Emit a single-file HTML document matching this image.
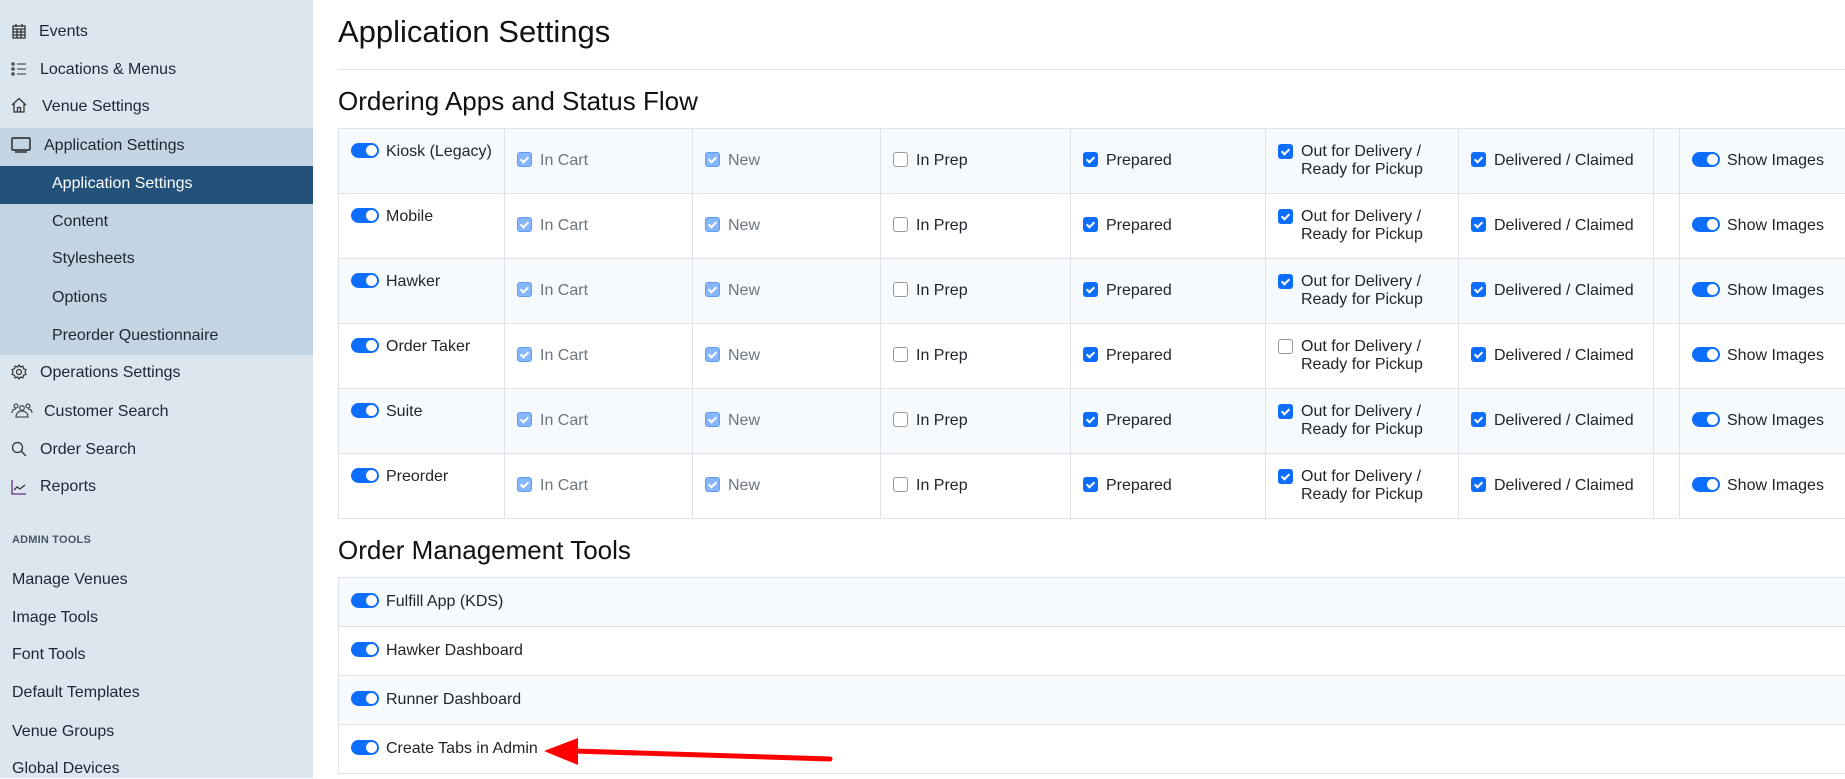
<!DOCTYPE html>
<html><head><meta charset="utf-8"><style>
*{box-sizing:border-box;margin:0;padding:0}
body{width:1845px;height:778px;overflow:hidden;background:#fff;font-family:"Liberation Sans",sans-serif;color:#212529;position:relative}
#sb{position:absolute;left:0;top:0;width:313px;height:778px;background:#dce6ef}
#sub{position:absolute;left:0;top:128px;width:313px;height:227px;background:#c3d4e3}
#act{position:absolute;left:0;top:166px;width:313px;height:38px;background:#22527a}
.si{position:absolute;font-size:16px;line-height:20px;color:#1d2733;white-space:nowrap}
.ic{position:absolute;left:11px;width:16px;height:16px}
.hd{position:absolute;left:12px;top:534px;font-size:11px;font-weight:bold;color:#4a5562;letter-spacing:.2px}
h1{position:absolute;left:338px;top:14px;font-size:31px;font-weight:normal;color:#111}
.hr{position:absolute;left:338px;top:69px;width:1507px;height:1px;background:#dee2e6}
h2{position:absolute;font-size:26px;font-weight:normal;color:#111;left:338px}
table{position:absolute;left:338px;border-collapse:collapse;font-size:16px;table-layout:fixed}
td{border:1px solid #dee2e6;padding:0 12px;vertical-align:middle;line-height:18px}
tr.o td{background:#f7fafd}
.t{display:inline-block;width:28px;height:15px;border-radius:8px;background:#0d6efd;position:relative;vertical-align:-2px;margin-right:7px}
.t:after{content:"";position:absolute;right:2px;top:2px;width:11px;height:11px;border-radius:50%;background:#fff}
.c{display:inline-block;width:15px;height:15px;border-radius:3px;background:#0d6efd;vertical-align:-2px;margin-right:8px;position:relative}
.c:after{content:"";position:absolute;left:5px;top:2.5px;width:3px;height:6px;border:solid #fff;border-width:0 2px 2px 0;transform:rotate(45deg)}
.c.l{background:#86b7fe;border:1px solid #5e9cf5}
.c.l:after{left:4px;top:1.5px}
.c.u{background:#fff;border:1px solid #999}
.c.u:after{display:none}
.g{color:#6c757d}
.f{vertical-align:top;padding-top:14px}
.od{display:flex}
.od .c{flex:none;margin-top:1px}
</style></head><body>
<div id="sb"></div><div id="sub"></div><div id="act"></div>
<svg class="ic" style="top:23px" viewBox="0 0 16 16" fill="none" stroke="#333" stroke-width="1.3"><rect x="2" y="3" width="12" height="12"/><path d="M2 6h12M2 9h12M2 12h12M6 6v9M10 6v9M5 1v3M11 1v3"/></svg>
<div class="si" style="left:39px;top:22px">Events</div>
<svg class="ic" style="top:61px" viewBox="0 0 16 16" stroke="#555" stroke-width="1.3"><path d="M6 3h9M6 8h9M6 13h9"/><circle cx="2" cy="3" r="1.2" fill="#555"/><circle cx="2" cy="8" r="1.2" fill="#555"/><circle cx="2" cy="13" r="1.2" fill="#555"/></svg>
<div class="si" style="left:40px;top:60px">Locations &amp; Menus</div>
<svg class="ic" style="top:97px" viewBox="0 0 16 16" fill="none" stroke="#333" stroke-width="1.3"><path d="M1 8L8 1.5 15 8M3 6.5V15h10V6.5M6.5 15v-4.5h3V15"/></svg>
<div class="si" style="left:42px;top:97px">Venue Settings</div>
<svg style="position:absolute;left:11px;top:137px;width:20px;height:16px" viewBox="0 0 20 16" fill="none" stroke="#222" stroke-width="1.4"><rect x="1" y="1" width="18" height="12" rx="1"/><path d="M4 15h12"/></svg>
<div class="si" style="left:44px;top:136px">Application Settings</div>
<div class="si" style="left:52px;top:174px;color:#fff">Application Settings</div>
<div class="si" style="left:52px;top:212px">Content</div>
<div class="si" style="left:52px;top:249px">Stylesheets</div>
<div class="si" style="left:52px;top:288px">Options</div>
<div class="si" style="left:52px;top:326px">Preorder Questionnaire</div>
<svg class="ic" style="top:364px" viewBox="0 0 16 16" fill="none" stroke="#333" stroke-width="1.2"><circle cx="8" cy="8" r="2.5"/><path d="M8 1l1.5 2 2.5-.8.5 2.5 2.5 1-1 2.3 1 2.3-2.5 1-.5 2.5-2.5-.8L8 15l-1.5-2-2.5.8-.5-2.5-2.5-1 1-2.3-1-2.3 2.5-1 .5-2.5 2.5.8z"/></svg>
<div class="si" style="left:40px;top:363px">Operations Settings</div>
<svg style="position:absolute;left:11px;top:402px;width:22px;height:16px" viewBox="0 0 22 16" fill="none" stroke="#333" stroke-width="1.1"><circle cx="5" cy="4" r="2"/><circle cx="11" cy="6" r="2.3"/><circle cx="17" cy="4" r="2"/><path d="M1 11c0-3 2-4 4-4M21 11c0-3-2-4-4-4M5 15c0-4 3-6 6-6s6 2 6 6z"/></svg>
<div class="si" style="left:44px;top:402px">Customer Search</div>
<svg class="ic" style="top:441px" viewBox="0 0 16 16" fill="none" stroke="#333" stroke-width="1.3"><circle cx="6.5" cy="6.5" r="5"/><path d="M10 10l5 5"/></svg>
<div class="si" style="left:40px;top:440px">Order Search</div>
<svg class="ic" style="top:479px" viewBox="0 0 16 16" fill="none" stroke-width="1.3"><path d="M1 1v14h14" stroke="#6a2a8a"/><path d="M3 11l3-3 3 2 5-4" stroke="#333"/></svg>
<div class="si" style="left:40px;top:477px">Reports</div>
<div class="hd">ADMIN TOOLS</div>
<div class="si" style="left:12px;top:570px">Manage Venues</div>
<div class="si" style="left:12px;top:608px">Image Tools</div>
<div class="si" style="left:12px;top:645px">Font Tools</div>
<div class="si" style="left:12px;top:683px">Default Templates</div>
<div class="si" style="left:12px;top:722px">Venue Groups</div>
<div class="si" style="left:12px;top:759px">Global Devices</div>

<h1>Application Settings</h1>
<div class="hr"></div>
<h2 style="top:86px">Ordering Apps and Status Flow</h2>
<table style="top:128px;width:1600px">
<colgroup><col style="width:166px"><col style="width:188px"><col style="width:188px"><col style="width:190px"><col style="width:195px"><col style="width:193px"><col style="width:195px"><col style="width:26px"><col></colgroup>
<tr class="o" style="height:65px"><td class="f"><span class="t"></span>Kiosk (Legacy)</td><td class="g"><span class="c l"></span>In Cart</td><td class="g"><span class="c l"></span>New</td><td><span class="c u"></span>In Prep</td><td><span class="c"></span>Prepared</td><td><div class="od"><span class="c"></span><span>Out for Delivery /<br>Ready for Pickup</span></div></td><td><span class="c"></span>Delivered / Claimed</td><td></td><td><span class="t"></span>Show Images</td></tr>
<tr style="height:65px"><td class="f"><span class="t"></span>Mobile</td><td class="g"><span class="c l"></span>In Cart</td><td class="g"><span class="c l"></span>New</td><td><span class="c u"></span>In Prep</td><td><span class="c"></span>Prepared</td><td><div class="od"><span class="c"></span><span>Out for Delivery /<br>Ready for Pickup</span></div></td><td><span class="c"></span>Delivered / Claimed</td><td></td><td><span class="t"></span>Show Images</td></tr>
<tr class="o" style="height:65px"><td class="f"><span class="t"></span>Hawker</td><td class="g"><span class="c l"></span>In Cart</td><td class="g"><span class="c l"></span>New</td><td><span class="c u"></span>In Prep</td><td><span class="c"></span>Prepared</td><td><div class="od"><span class="c"></span><span>Out for Delivery /<br>Ready for Pickup</span></div></td><td><span class="c"></span>Delivered / Claimed</td><td></td><td><span class="t"></span>Show Images</td></tr>
<tr style="height:65px"><td class="f"><span class="t"></span>Order Taker</td><td class="g"><span class="c l"></span>In Cart</td><td class="g"><span class="c l"></span>New</td><td><span class="c u"></span>In Prep</td><td><span class="c"></span>Prepared</td><td><div class="od"><span class="c u"></span><span>Out for Delivery /<br>Ready for Pickup</span></div></td><td><span class="c"></span>Delivered / Claimed</td><td></td><td><span class="t"></span>Show Images</td></tr>
<tr class="o" style="height:65px"><td class="f"><span class="t"></span>Suite</td><td class="g"><span class="c l"></span>In Cart</td><td class="g"><span class="c l"></span>New</td><td><span class="c u"></span>In Prep</td><td><span class="c"></span>Prepared</td><td><div class="od"><span class="c"></span><span>Out for Delivery /<br>Ready for Pickup</span></div></td><td><span class="c"></span>Delivered / Claimed</td><td></td><td><span class="t"></span>Show Images</td></tr>
<tr style="height:65px"><td class="f"><span class="t"></span>Preorder</td><td class="g"><span class="c l"></span>In Cart</td><td class="g"><span class="c l"></span>New</td><td><span class="c u"></span>In Prep</td><td><span class="c"></span>Prepared</td><td><div class="od"><span class="c"></span><span>Out for Delivery /<br>Ready for Pickup</span></div></td><td><span class="c"></span>Delivered / Claimed</td><td></td><td><span class="t"></span>Show Images</td></tr>
</table>
<h2 style="top:535px">Order Management Tools</h2>
<table style="top:577px;width:1600px">
<tr class="o" style="height:49px"><td><span class="t"></span>Fulfill App (KDS)</td></tr>
<tr style="height:49px"><td><span class="t"></span>Hawker Dashboard</td></tr>
<tr class="o" style="height:49px"><td><span class="t"></span>Runner Dashboard</td></tr>
<tr style="height:49px"><td><span class="t"></span>Create Tabs in Admin</td></tr>
</table>
<svg style="position:absolute;left:0;top:0" width="1845" height="778"><path d="M574 751L830 759" stroke="#f00" stroke-width="5" stroke-linecap="round"/><path d="M544 751L578 738L578 765Z" fill="#f00"/></svg>
</body></html>
